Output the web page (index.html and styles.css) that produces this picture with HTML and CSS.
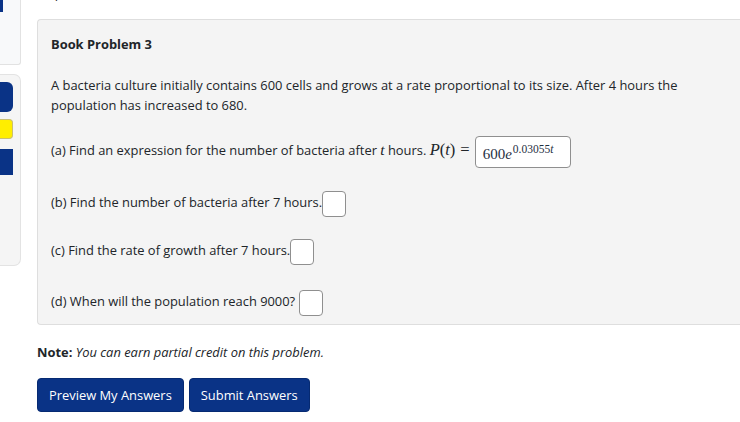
FILE: index.html
```html
<!DOCTYPE html>
<html>
<head>
<meta charset="utf-8">
<link rel="stylesheet" href="styles.css">
</head>
<body>
<div class="page">
  <aside class="sidebar">
    <div class="side-top"><span class="side-top-btn"></span></div>
    <div class="side-panel">
      <span class="blk blk-round"></span>
      <span class="blk blk-yellow"></span>
      <span class="blk blk-square"></span>
    </div>
  </aside>
  <main class="main">
    <div class="points">(1 point)</div>
    <div class="problem">
      <div class="title">Book Problem 3</div>
      <p class="para">A bacteria culture initially contains 600 cells and grows at a rate proportional to its size. After 4 hours the population has increased to 680.</p>
      <div class="q q-a">(a) Find an expression for the number of bacteria after <span class="mi">t</span> hours. <span class="math"><span class="mi">P</span>(<span class="mi">t</span>)<span class="eq">=</span></span><span class="ans-big"><span class="mn">600</span><span class="mi">e</span><sup class="sup">0.03055<span class="mi">t</span></sup></span></div>
      <div class="q q-b">(b) Find the number of bacteria after 7 hours.<span class="ans-box"></span></div>
      <div class="q q-c">(c) Find the rate of growth after 7 hours.<span class="ans-box"></span></div>
      <div class="q q-d">(d) When will the population reach 9000? <span class="ans-box"></span></div>
    </div>
    <p class="note"><b>Note:</b> <i>You can earn partial credit on this problem.</i></p>
    <div class="buttons">
      <button class="btn">Preview My Answers</button>
      <button class="btn">Submit Answers</button>
    </div>
  </main>
</div>
</body>
</html>
```
FILE: styles.css
```css
html, body {
  margin: 0;
  padding: 0;
  background: #fff;
  overflow: hidden;
}
body {
  font-family: "Open Sans", "Noto Sans", sans-serif;
  font-size: 12.9px;
  color: #212529;
  width: 740px;
  height: 422px;
}
.page {
  display: flex;
  gap: 16px;
  align-items: flex-start;
}
.sidebar {
  width: 21px;
  flex: none;
  display: flex;
  flex-direction: column;
  gap: 9px;
}
.side-top {
  height: 64px;
  background: #f8f9fa;
  border-right: 1px solid #e2e2e2;
  border-bottom: 1px solid #e2e2e2;
  border-bottom-right-radius: 3px;
}
.side-top-btn {
  display: block;
  width: 3px;
  height: 12px;
  background: #0a3386;
}
.side-panel {
  height: 183px;
  background: #f5f5f5;
  border: 1px solid #e3e3e3;
  border-left: none;
  border-radius: 0 7px 7px 0;
  padding-top: 7px;
  display: flex;
  flex-direction: column;
  gap: 7px;
}
.blk {
  display: block;
  width: 13px;
  background: #0a3386;
}
.blk-round {
  height: 30px;
  border-radius: 0 6px 6px 0;
}
.blk-yellow {
  height: 18px;
  background: #ffee00;
  border: 1px solid #c9bf72;
  border-left: none;
  border-radius: 0 4px 4px 0;
  width: 12px;
}
.blk-square {
  height: 26px;
  margin-top: 3px;
}
.main {
  flex: 1;
  min-width: 0;
}
.points {
  height: 35px;
  margin-top: -16px;
  margin-left: 3px;
  font-size: 13px;
  line-height: 18px;
}
.problem {
  background: #f4f4f4;
  border: 1px solid #dedede;
  border-right: none;
  border-radius: 4px 0 0 4px;
  padding: 14px 13px 12px;
  height: 278px;
  box-sizing: content-box;
}
.title {
  font-weight: bold;
  line-height: 20px;
}
.para {
  margin: 21px 0 0;
  line-height: 20px;
  width: 640px;
}
.q {
  line-height: 20px;
  white-space: nowrap;
}
.q-a { margin-top: 19px; height: 32px; line-height: 32px; }
.q-b { margin-top: 23px; height: 26px; line-height: 26px; }
.q-c { margin-top: 22px; height: 26px; line-height: 26px; }
.q-d { margin-top: 25px; height: 26px; line-height: 26px; }
.mi {
  font-family: "Liberation Serif", serif;
  font-style: italic;
}
.q > .mi { font-size: 15.5px; }
.mn {
  font-family: "Liberation Serif", serif;
}
.math {
  font-family: "Liberation Serif", serif;
  font-size: 16.5px;
}
.eq { margin: 0 5px; }
.ans-big {
  display: inline-block;
  vertical-align: middle;
  box-sizing: border-box;
  width: 96px;
  height: 32px;
  line-height: 30px;
  padding: 2px 0 0 7px;
  background: #fff;
  border: 1px solid #8f8f8f;
  border-radius: 4px;
  font-family: "Liberation Serif", serif;
  font-size: 15px;
  color: #1f2f3f;
}
.sup {
  font-size: 11.5px;
  vertical-align: 6px;
  line-height: 1;
  margin-left: 1px;
}
.ans-box {
  display: inline-block;
  vertical-align: middle;
  box-sizing: border-box;
  width: 24px;
  height: 26px;
  background: #fff;
  border: 1px solid #8f8f8f;
  border-radius: 4px;
}
.note {
  margin: 17px 0 0;
  line-height: 20px;
}
.buttons {
  display: flex;
  gap: 5px;
  margin-top: 16px;
}
.btn {
  font-family: inherit;
  font-size: 12.9px;
  color: #fff;
  background: #0a3386;
  border: 1px solid #062a72;
  border-radius: 4px;
  height: 34px;
  padding: 0 11px;
  line-height: 20px;
}
```
